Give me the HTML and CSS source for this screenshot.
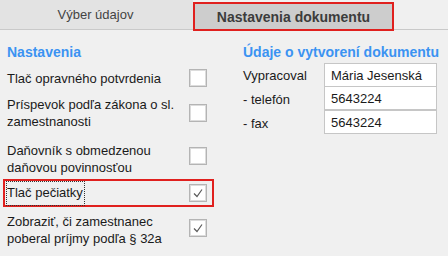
FILE: index.html
```html
<!DOCTYPE html>
<html lang="sk">
<head>
<meta charset="utf-8">
<link rel="stylesheet" href="styles.css">
</head>
<body>
<div class="tabs">
  <div class="tab tab-plain">Výber údajov</div>
  <div class="tab tab-active">Nastavenia dokumentu</div>
  <div class="tab-rest"></div>
</div>
<div class="content">
  <section class="left">
    <h2 class="heading">Nastavenia</h2>
    <div class="row r1"><span class="label">Tlač opravného potvrdenia</span><span class="box"></span></div>
    <div class="row r2"><span class="label">Príspevok podľa zákona o sl.<br>zamestnanosti</span><span class="box"></span></div>
    <div class="row r3"><span class="label">Daňovník s obmedzenou<br>daňovou povinnosťou</span><span class="box"></span></div>
    <div class="row r4"><span class="label focus">Tlač pečiatky</span><span class="box"><svg viewBox="0 0 18 18" width="18" height="18"><polyline points="5,9.5 8,12.5 13,5.5" fill="none" stroke="#5a5a5a" stroke-width="1.2"/></svg></span></div>
    <div class="row r5"><span class="label">Zobraziť, či zamestnanec<br>poberal príjmy podľa § 32a</span><span class="box"><svg viewBox="0 0 18 18" width="18" height="18"><polyline points="5,9.5 8,12.5 13,5.5" fill="none" stroke="#5a5a5a" stroke-width="1.2"/></svg></span></div>
  </section>
  <section class="right">
    <h2 class="heading">Údaje o vytvorení dokumentu</h2>
    <div class="form">
      <span class="flabel">Vypracoval</span><span class="field">Mária Jesenská</span>
      <span class="flabel">- telefón</span><span class="field">5643224</span>
      <span class="flabel">- fax</span><span class="field">5643224</span>
    </div>
  </section>
</div>
</body>
</html>
```
FILE: styles.css
```css
* { box-sizing: border-box; }
html, body { margin: 0; padding: 0; }
body {
  width: 448px;
  height: 256px;
  overflow: hidden;
  background: #f0f0f0;
  font-family: "Liberation Sans", Arial, sans-serif;
  font-size: 13px;
  color: #1a1a1a;
}
.tabs {
  display: flex;
  height: 31px;
}
.tab {
  display: flex;
  align-items: center;
  justify-content: center;
}
.tab-plain {
  width: 193px;
  height: 30px;
  background: #e3e3e3;
  border-bottom: 1px solid #c9c9c9;
  color: #444;
  padding-right: 2px;
}
.tab-active {
  width: 201px;
  height: 29px;
  margin-top: 2px;
  background: #cdcdcd;
  border: 2px solid #e0201e;
  font-weight: bold;
  font-size: 14px;
  color: #3c3c3c;
}
.tab-rest {
  flex: 1;
  height: 30px;
  border-bottom: 1px solid #c9c9c9;
}
.content {
  display: flex;
}
.heading {
  margin: 13px 0 0;
  font-size: 14px;
  font-weight: bold;
  line-height: 17px;
  color: #3b93f2;
}
.left {
  width: 214px;
  padding-left: 7px;
}
.row {
  display: flex;
  align-items: center;
  justify-content: space-between;
  width: 200px;
  line-height: 17px;
}
.r1 { height: 28px; margin-top: 3px; }
.r2 { height: 42px; }
.r3 { height: 44px; }
.r3 .label { margin-top: 6px; }
.r4 {
  height: 28px;
  margin-top: 1px;
  margin-left: -4px;
  width: 211px;
  padding-left: 2px;
  padding-right: 5px;
  border: 2px solid #e0201e;
}
.r5 { height: 36px; margin-top: 3px; }
.r5 .label { margin-top: 3px; }
.focus {
  outline: 1px dotted #333;
  padding: 2px 1px 3px 0;
  line-height: 18px;
}
.box {
  width: 18px;
  height: 18px;
  flex: none;
  background: #fff;
  border: 1px solid #b4b4b4;
  box-shadow: inset 0 0 0 1px #dcdcdc;
  display: flex;
}
.box svg { margin: -1px; }
.right {
  padding-left: 29px;
  flex: 1;
}
.form {
  display: grid;
  grid-template-columns: 81px 113px;
  margin-top: 2px;
}
.flabel {
  display: flex;
  align-items: center;
  height: 24px;
}
.field {
  display: flex;
  align-items: center;
  height: 24px;
  padding-left: 6px;
  background: #fff;
  border: 1px solid #c6c6c6;
  margin-top: -1px;
}
.field:nth-child(2) { margin-top: 0; }
```
